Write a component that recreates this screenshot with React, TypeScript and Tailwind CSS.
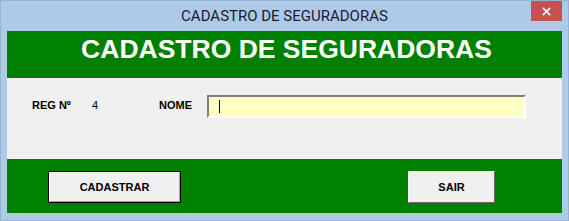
export default function App() {
  return (
    <div className="w-[569px] h-[221px] bg-[#adcbe8] border border-[#94b4d6] flex flex-col overflow-hidden">
      {/* Title bar */}
      <div className="relative h-[30px] flex items-center justify-center shrink-0">
        <span className="text-[15px] text-[#1b1b2b] leading-none mt-[1px]" style={{ fontFamily: "Roboto, sans-serif" }}>
          CADASTRO DE SEGURADORAS
        </span>
        <button className="absolute top-0 right-[6px] w-[31px] h-[20px] bg-[#c75050] flex items-center justify-center">
          <svg viewBox="0 0 10 10" className="w-[9px] h-[9px]" stroke="white" strokeWidth="1.8">
            <line x1="1" y1="1" x2="9" y2="9" />
            <line x1="9" y1="1" x2="1" y2="9" />
          </svg>
        </button>
      </div>

      {/* Body */}
      <div className="flex flex-col px-[6px]" style={{ fontFamily: "'Liberation Sans', Arial, sans-serif" }}>
        <div className="h-[47px] bg-[#008000] flex justify-center pt-[3px]">
          <h1 className="text-[26.5px] font-bold text-white leading-[30px] ml-[4px]">CADASTRO DE SEGURADORAS</h1>
        </div>

        <div className="h-[81px] bg-[#f0f0f0] flex items-start pt-[17px] pl-[25px]">
          <span className="w-[60px] text-[11px] font-bold text-black mt-[2px]">REG Nº</span>
          <span className="w-[67px] text-[11px] text-black mt-[2px]">4</span>
          <span className="w-[48px] text-[11px] font-bold text-black mt-[2px]">NOME</span>
          <div className="w-[319px] h-[23px] bg-[#ffffc4] border-2 border-t-[#808080] border-l-[#808080] border-b-white border-r-white flex items-center pl-[10px]">
            <span className="w-[1px] h-[13px] bg-[#000050]" />
          </div>
        </div>

        <div className="h-[54px] bg-[#008000] flex items-start pt-[12px] pl-[41px]">
          <button className="w-[133px] h-[32px] border border-black bg-[#f0f0f0] flex">
            <span className="flex-1 flex items-center justify-center border border-t-white border-l-white border-b-[#a0a0a0] border-r-[#a0a0a0] text-[11px] font-bold text-black">
              CADASTRAR
            </span>
          </button>
          <button className="ml-[227px] w-[87px] h-[32px] bg-[#f0f0f0] border border-t-white border-l-white border-b-[#696969] border-r-[#696969] flex items-center justify-center text-[11px] font-bold text-black">
            SAIR
          </button>
        </div>
      </div>
    </div>
  );
}
